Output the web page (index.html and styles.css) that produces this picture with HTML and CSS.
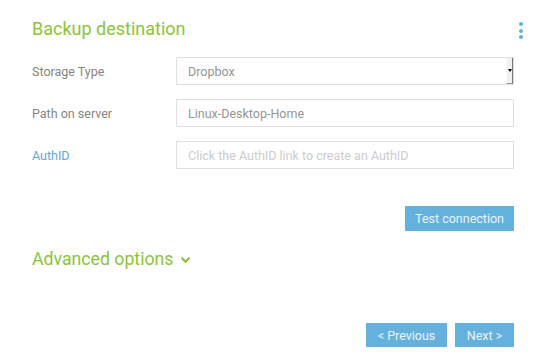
FILE: index.html
```html
<!DOCTYPE html>
<html>
<head>
<meta charset="utf-8">
<link rel="stylesheet" href="styles.css">
</head>
<body>
<div class="page">
  <div class="header">
    <h1 class="title">Backup destination</h1>
    <div class="kebab"><span></span><span></span><span></span></div>
  </div>
  <div class="form">
    <div class="row">
      <label class="label">Storage Type</label>
      <div class="select">
        <span class="value">Dropbox</span>
        <span class="arrow-btn"><span class="arrow"></span></span>
      </div>
    </div>
    <div class="row">
      <label class="label">Path on server</label>
      <div class="input"><span class="value">Linux-Desktop-Home</span></div>
    </div>
    <div class="row">
      <label class="label link">AuthID</label>
      <div class="input"><span class="placeholder">Click the AuthID link to create an AuthID</span></div>
    </div>
  </div>
  <div class="test-row">
    <button class="btn test">Test connection</button>
  </div>
  <div class="advanced">
    <span class="adv-text">Advanced options</span>
    <svg class="chev" width="11" height="8" viewBox="0 0 11 8"><path d="M1.5 1.8 L5.5 5.8 L9.5 1.8" fill="none" stroke="#8cc43c" stroke-width="2.2"/></svg>
  </div>
  <div class="nav">
    <button class="btn prev">&lt; Previous</button>
    <button class="btn next">Next &gt;</button>
  </div>
</div>
</body>
</html>
```

FILE: styles.css
```css
html, body {
  margin: 0;
  padding: 0;
  background: #fff;
}
body {
  font-family: Roboto, "Liberation Sans", sans-serif;
  color: #777;
}
.page {
  width: 482px;
  padding: 16px 0 0 32px;
}
.header {
  display: flex;
  justify-content: space-between;
  align-items: flex-start;
  height: 41px;
}
.title {
  margin: 0;
  font-weight: 400;
  font-size: 18px;
  line-height: 26px;
  color: #8cc43c;
}
.kebab {
  display: flex;
  flex-direction: column;
  gap: 2.5px;
  padding-top: 6px;
  margin-right: -9px;
}
.kebab span {
  width: 4px;
  height: 4px;
  border-radius: 50%;
  background: #5fb0e0;
}
.form {
  display: flex;
  flex-direction: column;
  gap: 14px;
}
.row {
  display: flex;
  align-items: center;
  height: 28px;
}
.label {
  width: 144px;
  font-size: 12.5px;
  color: #858585;
}
.label.link {
  color: #5ea9dc;
}
.select, .input {
  box-sizing: border-box;
  width: 338px;
  height: 28px;
  border: 1px solid #e0e0e0;
  display: flex;
  align-items: center;
  padding-left: 11px;
  font-size: 12.5px;
}
.value {
  color: #959595;
  flex: 1;
}
.placeholder {
  color: #cccccc;
}
.select {
  padding-right: 0;
}
.arrow-btn {
  width: 7px;
  height: 26px;
  background: #f1f1f1;
  border-left: 1px solid #fafafa;
  border-right: 1px solid #777;
  border-bottom: 1px solid #999;
  box-sizing: border-box;
  display: flex;
  align-items: center;
  justify-content: center;
}
.arrow {
  width: 0;
  height: 0;
  border-left: 2.5px solid transparent;
  border-right: 2.5px solid transparent;
  border-top: 3px solid #000;
}
.test-row {
  display: flex;
  justify-content: flex-end;
  margin-top: 37px;
}
.btn {
  border: 0;
  background: #65b1de;
  color: #eaf4fb;
  font-family: Roboto, "Liberation Sans", sans-serif;
  font-size: 12.5px;
  height: 25px;
  padding: 0;
  margin: 0;
  white-space: nowrap;
  text-align: center;
}
.test {
  width: 109px;
}
.advanced {
  display: flex;
  align-items: center;
  gap: 7px;
  margin-top: 15px;
  height: 26px;
}
.adv-text {
  font-size: 17.7px;
  color: #8cc43c;
}
.chev {
  margin-top: 1px;
}
.nav {
  display: flex;
  justify-content: flex-end;
  gap: 8px;
  margin-top: 51px;
}
.prev {
  width: 81px;
  height: 24px;
}
.next {
  width: 59px;
  height: 24px;
}
```
